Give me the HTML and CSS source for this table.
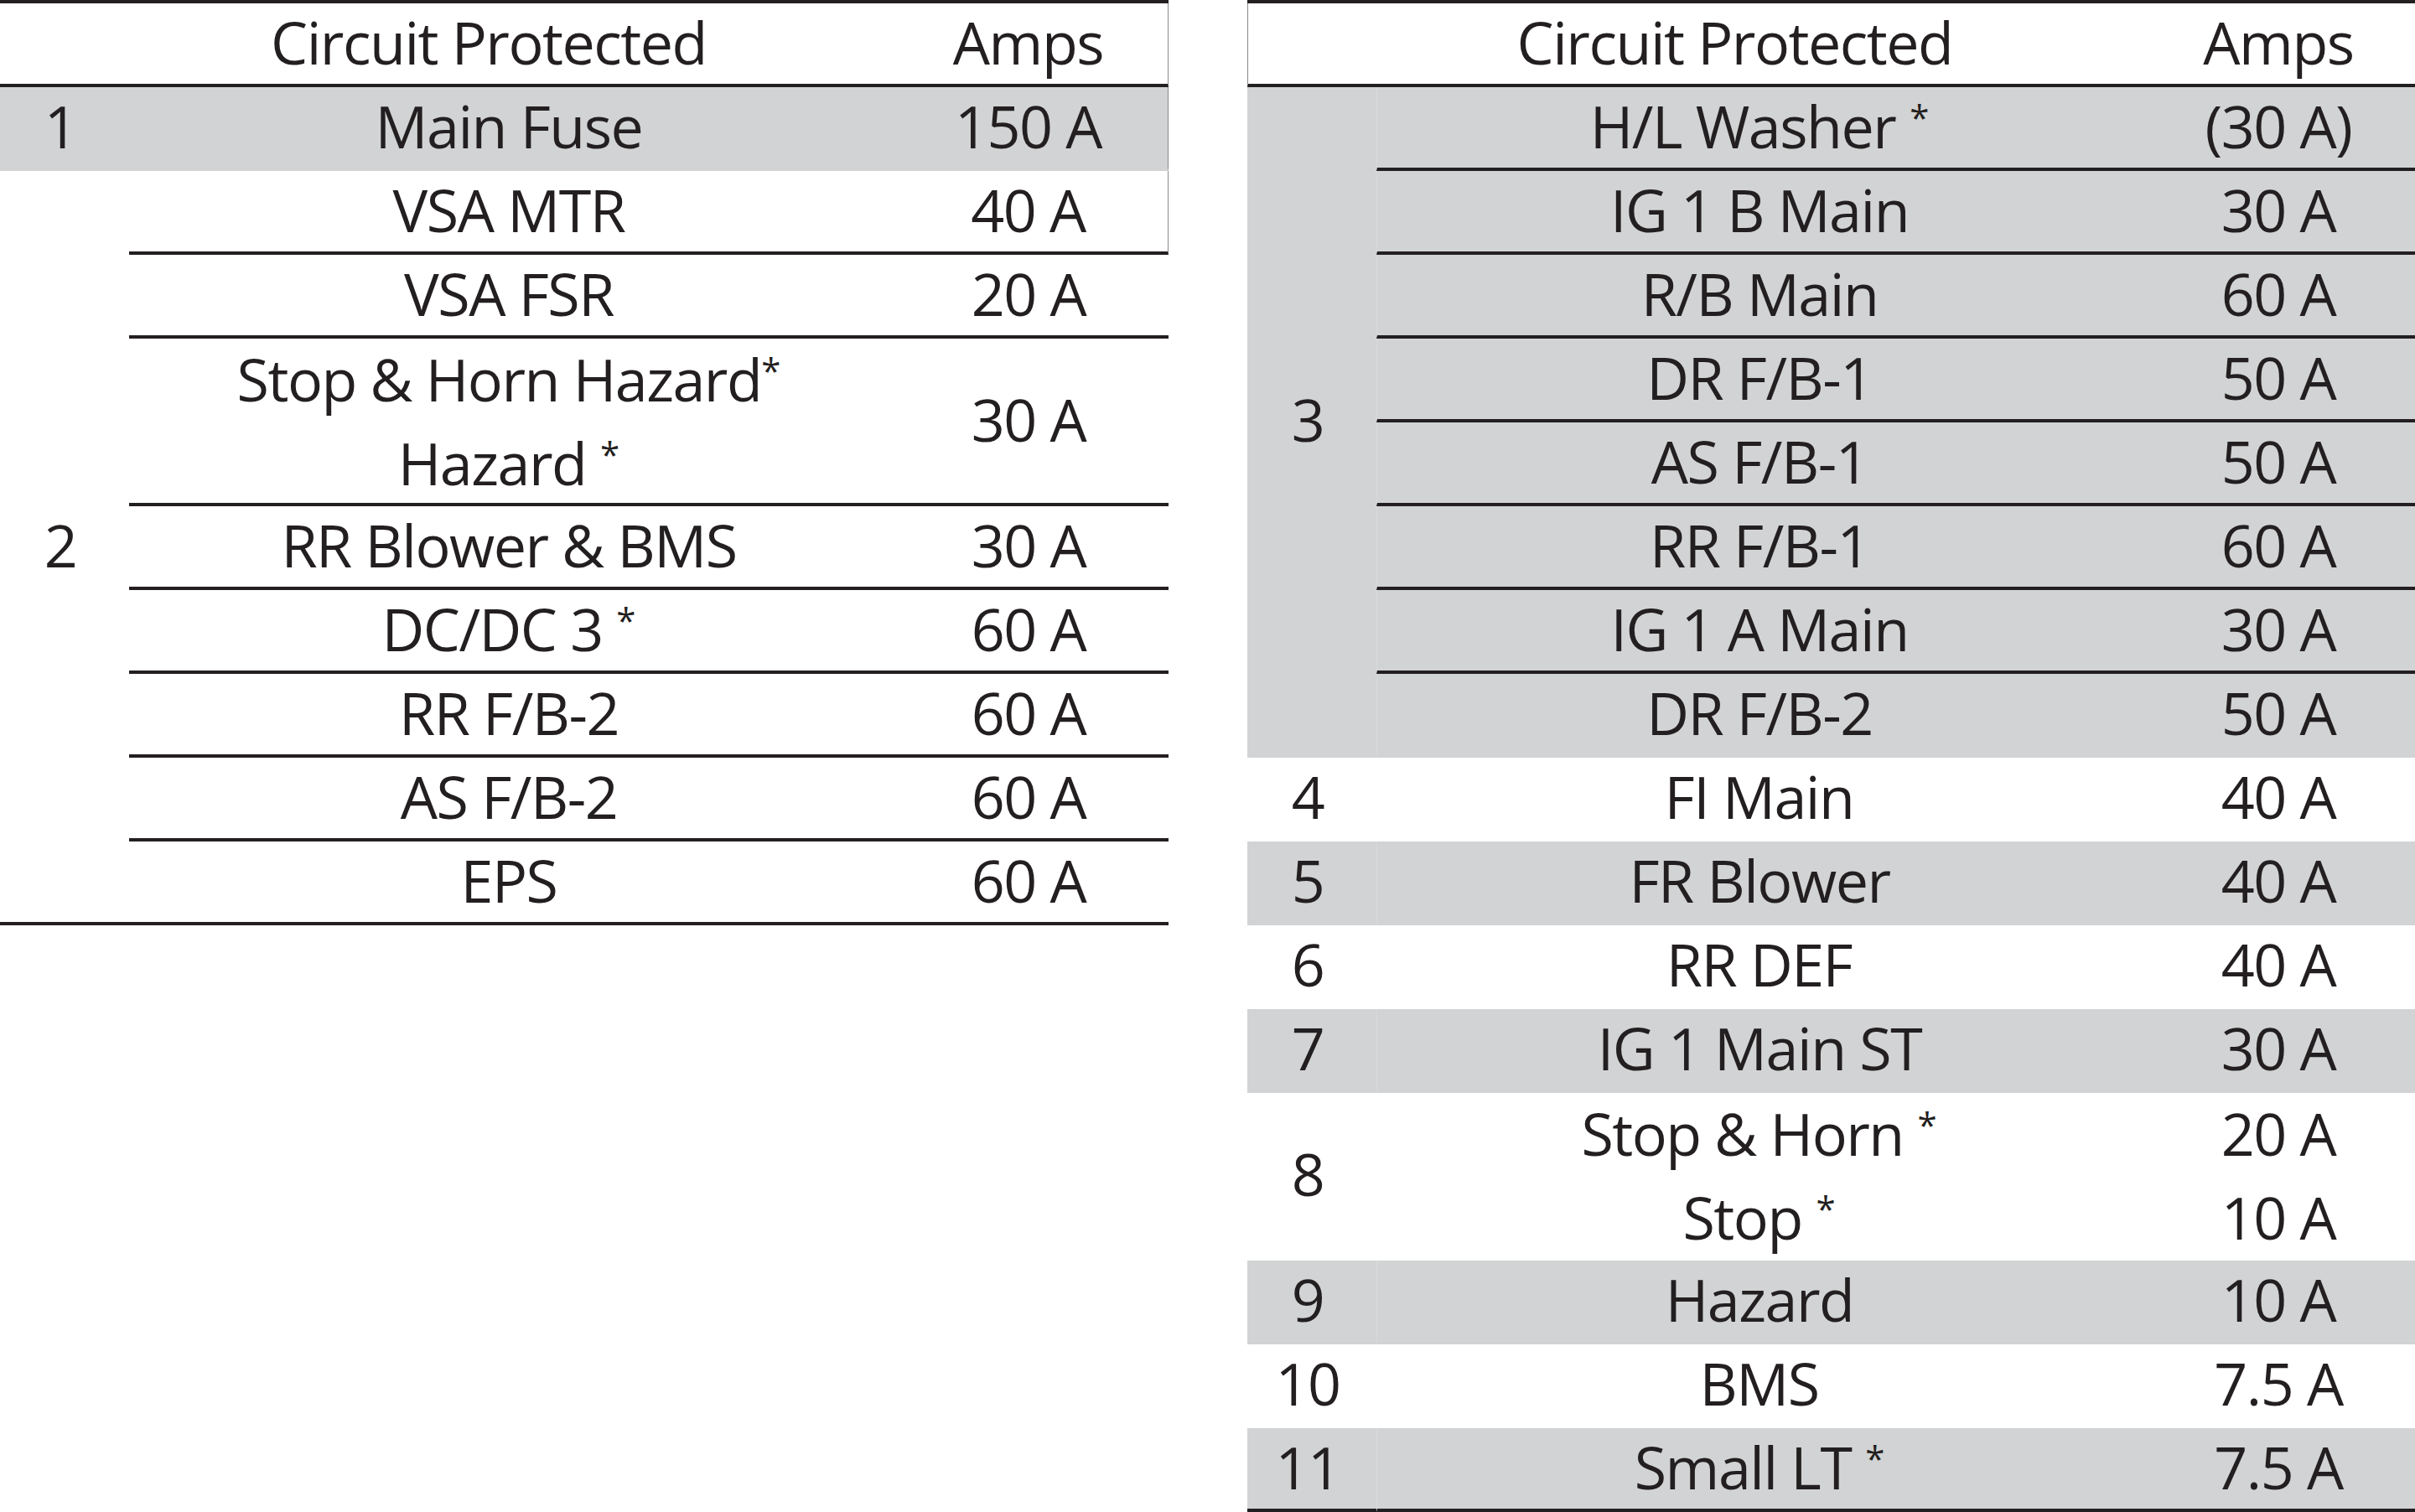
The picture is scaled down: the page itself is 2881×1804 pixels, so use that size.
FILE: index.html
```html
<!DOCTYPE html>
<html lang="en">
<head>
<meta charset="utf-8">
<title>Fuse Box</title>
<link rel="stylesheet" href="styles.css">
</head>
<body>
<div class="page">
  <div class="table left">
    <div class="cell head num"></div>
    <div class="cell head circ">Circuit Protected</div>
    <div class="cell head amp edge">Amps</div>

    <div class="cell num grey nb">1</div>
    <div class="cell circ grey nb">Main Fuse</div>
    <div class="cell amp grey nb edge">150 A</div>

    <div class="cell num g9">2</div>
    <div class="cell circ">VSA MTR</div>
    <div class="cell amp edge">40 A</div>
    <div class="cell circ">VSA FSR</div>
    <div class="cell amp">20 A</div>
    <div class="cell circ stack r2">
      <span class="line">Stop &amp; Horn Hazard<span class="ast">*</span></span>
      <span class="line">Hazard <span class="ast">*</span></span>
    </div>
    <div class="cell amp r2">30 A</div>
    <div class="cell circ">RR Blower &amp; BMS</div>
    <div class="cell amp">30 A</div>
    <div class="cell circ"><span class="txt">DC/DC 3 <span class="ast">*</span></span></div>
    <div class="cell amp">60 A</div>
    <div class="cell circ">RR F/B-2</div>
    <div class="cell amp">60 A</div>
    <div class="cell circ">AS F/B-2</div>
    <div class="cell amp">60 A</div>
    <div class="cell circ">EPS</div>
    <div class="cell amp">60 A</div>
  </div>

  <div class="table right">
    <div class="cell head num edge-l"></div>
    <div class="cell head circ">Circuit Protected</div>
    <div class="cell head amp">Amps</div>

    <div class="cell num grey nb g8">3</div>
    <div class="cell circ grey div"><span class="txt">H/L Washer <span class="ast">*</span></span></div>
    <div class="cell amp grey">(30 A)</div>
    <div class="cell circ grey div">IG 1 B Main</div>
    <div class="cell amp grey">30 A</div>
    <div class="cell circ grey div">R/B Main</div>
    <div class="cell amp grey">60 A</div>
    <div class="cell circ grey div">DR F/B-1</div>
    <div class="cell amp grey">50 A</div>
    <div class="cell circ grey div">AS F/B-1</div>
    <div class="cell amp grey">50 A</div>
    <div class="cell circ grey div">RR F/B-1</div>
    <div class="cell amp grey">60 A</div>
    <div class="cell circ grey div">IG 1 A Main</div>
    <div class="cell amp grey">30 A</div>
    <div class="cell circ grey div nb">DR F/B-2</div>
    <div class="cell amp grey nb">50 A</div>

    <div class="cell num nb">4</div>
    <div class="cell circ nb">FI Main</div>
    <div class="cell amp nb">40 A</div>

    <div class="cell num grey nb">5</div>
    <div class="cell circ grey nb div">FR Blower</div>
    <div class="cell amp grey nb">40 A</div>

    <div class="cell num nb">6</div>
    <div class="cell circ nb">RR DEF</div>
    <div class="cell amp nb">40 A</div>

    <div class="cell num grey nb">7</div>
    <div class="cell circ grey nb div">IG 1 Main ST</div>
    <div class="cell amp grey nb">30 A</div>

    <div class="cell num nb r2">8</div>
    <div class="cell circ nb stack r2">
      <span class="line">Stop &amp; Horn <span class="ast">*</span></span>
      <span class="line">Stop <span class="ast">*</span></span>
    </div>
    <div class="cell amp nb stack r2">
      <span class="line">20 A</span>
      <span class="line">10 A</span>
    </div>

    <div class="cell num grey nb">9</div>
    <div class="cell circ grey nb div">Hazard</div>
    <div class="cell amp grey nb">10 A</div>

    <div class="cell num nb">10</div>
    <div class="cell circ nb">BMS</div>
    <div class="cell amp nb">7.5 A</div>

    <div class="cell num grey">11</div>
    <div class="cell circ grey div"><span class="txt">Small LT <span class="ast">*</span></span></div>
    <div class="cell amp grey">7.5 A</div>
  </div>
</div>
</body>
</html>
```

FILE: styles.css
```css
html, body {
  margin: 0;
  padding: 0;
  background: #ffffff;
}

body {
  width: 2881px;
  height: 1804px;
  overflow: hidden;
  font-family: "Open Sans", "Noto Sans", sans-serif;
  font-size: 70px;
  letter-spacing: -1.5px;
  color: #231f20;
}

.page {
  display: flex;
  align-items: flex-start;
  gap: 94px;
}

.table {
  display: grid;
  grid-auto-rows: 100px;
  border-top: 4px solid #231f20;
}

.left {
  width: 1394px;
  grid-template-columns: 154px 906px 334px;
}

.right {
  width: 1393px;
  grid-template-columns: 154px 913px 326px;
}

.cell {
  box-sizing: border-box;
  display: flex;
  align-items: center;
  justify-content: center;
  padding-bottom: 4px;
  border-bottom: 4px solid #231f20;
  white-space: nowrap;
  line-height: 1.2;
}

.head.circ {
  padding-right: 48px;
}

.right .head.circ {
  padding-right: 58px;
}

.num {
  padding-right: 10px;
}

.grey {
  background: #d1d3d4;
}

.nb {
  border-bottom-color: transparent;
}

.grey.nb {
  border-bottom-color: #d1d3d4;
}

.edge {
  border-right: 1px solid #8a8a8a;
}

.edge-l {
  border-left: 1px solid #8a8a8a;
}

.div {
  border-left: 1px solid #d7d9da;
}

.g9 {
  grid-row: span 9;
}

.g8 {
  grid-row: span 8;
}

.r2 {
  grid-row: span 2;
}

.stack {
  flex-direction: column;
  padding-bottom: 0;
}

.line {
  display: block;
  line-height: 100px;
}

.txt {
  display: inline-block;
}

.ast {
  font-size: 0.6em;
  vertical-align: 0.5em;
  line-height: 0;
  letter-spacing: 0;
}
```
